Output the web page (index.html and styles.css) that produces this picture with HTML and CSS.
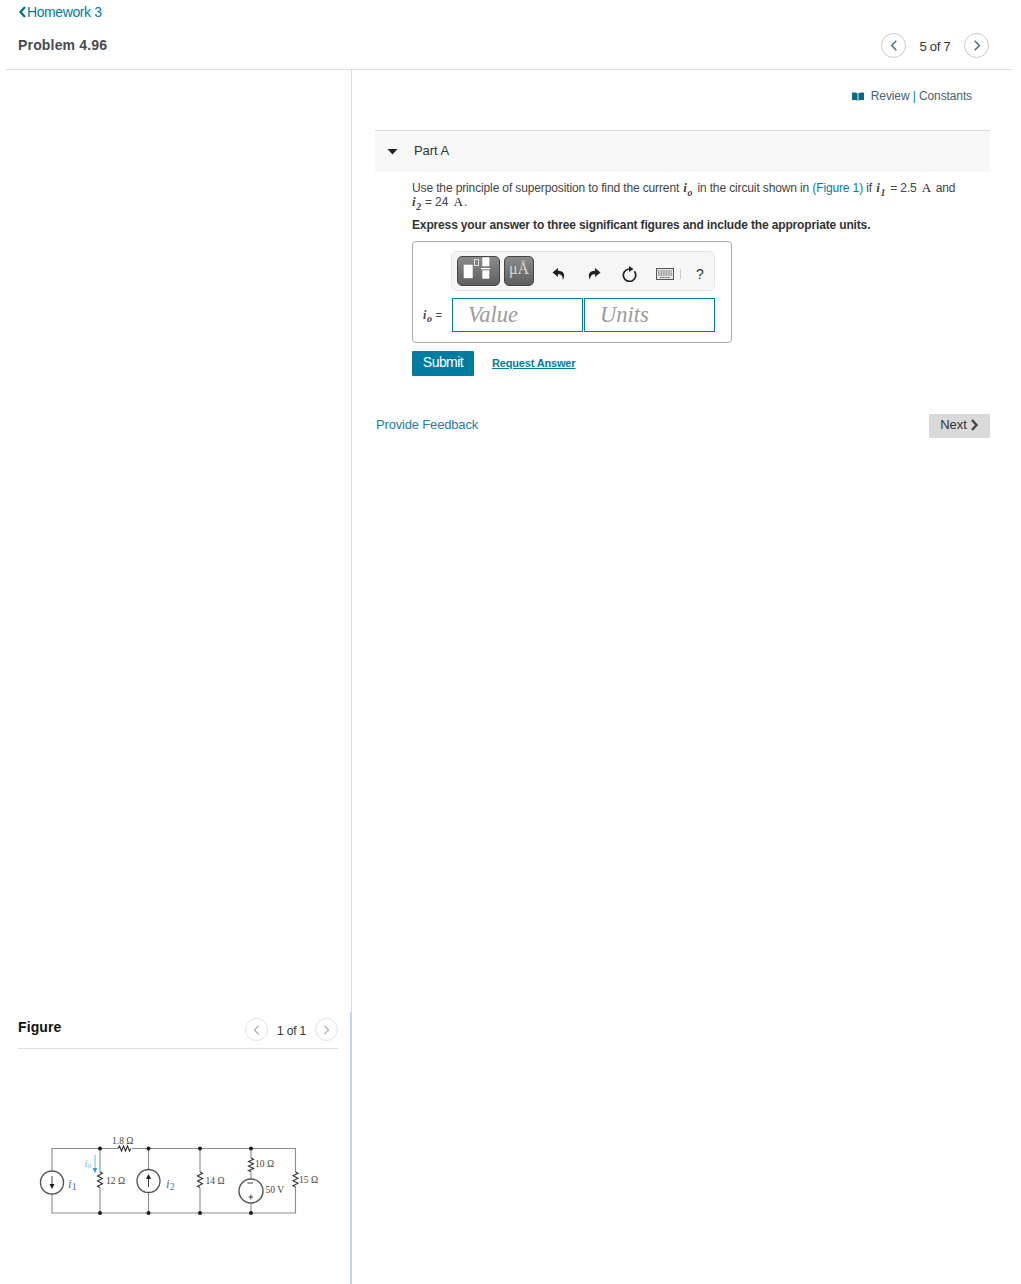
FILE: index.html
```html
<!DOCTYPE html>
<html lang="en">
<head>
<meta charset="utf-8">
<title>Problem 4.96</title>
<link rel="stylesheet" href="styles.css">
</head>
<body>
<header class="header">
  <a class="back"><svg class="back-icon" viewBox="0 0 8 12"><path d="M6.5 1 L2 6 L6.5 11" /></svg>Homework 3</a>
  <div class="title-row">
    <h1 class="title">Problem 4.96</h1>
    <div class="pager">
      <span class="circle"><svg viewBox="0 0 10 14"><path d="M7.5 2 L2.5 7 L7.5 12"/></svg></span>
      <span class="pager-text">5 of 7</span>
      <span class="circle"><svg viewBox="0 0 10 14"><path d="M2.5 2 L7.5 7 L2.5 12"/></svg></span>
    </div>
  </div>
</header>
<main class="main">
  <aside class="left">
    <div class="fig-head">
      <h2 class="fig-title">Figure</h2>
      <div class="fig-pager">
        <span class="circle small"><svg viewBox="0 0 10 14"><path d="M7.5 2 L2.5 7 L7.5 12"/></svg></span>
        <span class="fig-pager-text">1 of 1</span>
        <span class="circle small"><svg viewBox="0 0 10 14"><path d="M2.5 2 L7.5 7 L2.5 12"/></svg></span>
      </div>
    </div>
    <svg class="circuit" viewBox="30 1125 292 100" width="292" height="100">
      <g class="wire">
        <path d="M52 1171 V1148.5 H118 M132 1148.5 H295.5 V1172 M295.5 1187 V1213 H52 V1194"/>
        <path d="M100 1148.5 V1172 M100 1188 V1213"/>
        <path d="M148.500 1148.500 V1169 M148.500 1193 V1213"/>
        <path d="M200 1148.500 V1172 M200 1188 V1213"/>
        <path d="M251 1148.500 V1158 M251 1172 V1179 M251 1203 V1213"/>
      </g>
      <g class="res">
        <path d="M118 1148.500 l1.500 -2.500 l2 5 l2 -5 l2 5 l2 -5 l2 5 l1.500 -2.500"/>
        <path d="M100 1172 l2.500 1.300 l-5 2.600 l5 2.600 l-5 2.600 l5 2.600 l-5 2.600 l2.500 1.300"/>
        <path d="M200 1172 l2.500 1.300 l-5 2.600 l5 2.600 l-5 2.600 l5 2.600 l-5 2.600 l2.500 1.300"/>
        <path d="M251 1158 l2.500 1.200 l-5 2.300 l5 2.300 l-5 2.300 l5 2.300 l-5 2.300 l2.500 .8"/>
        <path d="M295.500 1172 l2.500 1.200 l-5 2.500 l5 2.500 l-5 2.500 l5 2.500 l-5 2.500 l2.500 1.300"/>
      </g>
      <g class="src">
        <circle cx="52" cy="1182.500" r="11.500"/>
        <circle cx="148.500" cy="1181" r="11.500"/>
        <circle cx="251" cy="1191" r="12"/>
      </g>
      <g class="arrow-line">
        <path d="M52 1176 V1187"/>
        <path d="M148.500 1176 V1187"/>
        <path d="M247.500 1183 H253"/>
        <path d="M248.500 1197 H253 M250.800 1194.500 V1199.500"/>
      </g>
      <path class="arrow-head" d="M49.500 1184 H54.500 L52 1189 Z"/>
      <path class="arrow-head" d="M146 1179 H151 L148.500 1174 Z"/>
      <g class="dots">
        <circle cx="100" cy="1148.500" r="2"/><circle cx="148.500" cy="1148.500" r="2"/><circle cx="200" cy="1148.500" r="2"/><circle cx="251" cy="1148.500" r="2"/>
        <circle cx="100" cy="1213" r="2"/><circle cx="148.500" cy="1213" r="2"/><circle cx="200" cy="1213" r="2"/><circle cx="251" cy="1213" r="2"/>
      </g>
      <path class="io-line" d="M95 1155 V1171"/>
      <path class="io-head" d="M92.700 1168 H97.300 L95 1173 Z"/>
      <text class="ct" x="112" y="1143.500">1.8 Ω</text>
      <text class="ct" x="106" y="1183.500">12 Ω</text>
      <text class="ct" x="205.500" y="1184">14 Ω</text>
      <text class="ct" x="255" y="1167">10 Ω</text>
      <text class="ct" x="265.500" y="1193">50 V</text>
      <text class="ct" x="299" y="1182.500">15 Ω</text>
      <text class="cl" x="68" y="1188">i<tspan class="sb" dy="2">1</tspan></text>
      <text class="cl" x="166" y="1188">i<tspan class="sb" dy="2">2</tspan></text>
      <text class="clb" x="84.500" y="1167">i<tspan class="sbb" dy="1">o</tspan></text>
    </svg>
  </aside>
  <section class="right">
    <div class="review"><svg class="book" viewBox="0 0 13 9"><path d="M0 .5 C2 0 5 0 6 1 V9 C5 8 2 8 0 8.500 Z M13 .5 C11 0 8 0 7 1 V9 C8 8 11 8 13 8.500 Z"/></svg><a class="review-link">Review</a><span class="sep"> | </span><a class="review-link">Constants</a></div>
    <div class="part-bar"><svg class="caret" viewBox="0 0 10 6"><path d="M0 0 H10 L5 5.500 Z"/></svg><span class="part-name">Part A</span></div>
    <div class="part-body">
      <p class="prompt">Use the principle of superposition to find the current <span class="m gap">i<sub>o</sub></span> in the circuit shown in <a class="link">(Figure 1)</a> if <span class="m gap">i<sub>1</sub></span> = 2.5 <span class="u">A</span> and<br><span class="m">i<sub>2</sub></span> = 24 <span class="u">A</span>.</p>
      <p class="instr">Express your answer to three significant figures and include the appropriate units.</p>
      <div class="answer">
        <div class="toolbar">
          <span class="tbtn tmpl">
            <svg viewBox="458 257 41 28" width="41" height="28"><rect class="w" x="463.700" y="264.700" width="9" height="13.500"/><rect class="o" x="474.500" y="259.500" width="4" height="6"/><rect class="w" x="482.300" y="257.300" width="7" height="9"/><rect class="w" x="481" y="268" width="9" height="1.300"/><rect class="w" x="482.300" y="270.300" width="7" height="8.400"/></svg>
          </span>
          <span class="tbtn unit"><span class="unit-text">μÅ</span></span>
          <svg class="tool t1" viewBox="0 0 14 14"><path d="M6 1 L0.500 5.500 L6 10 V7.300 C9 7.300 10.700 8.500 11 13 C13.500 8 12 3.800 6 3.800 Z"/></svg>
          <svg class="tool t2" viewBox="0 0 14 14"><path d="M8 1 L13.500 5.500 L8 10 V7.300 C5 7.300 3.300 8.500 3 13 C.5 8 2 3.800 8 3.800 Z"/></svg>
          <svg class="tool t3" viewBox="0 0 16 16"><path class="ring" d="M12.300 5.200 A6.200 6.200 0 1 1 7 3"/><path d="M7 0 L11.500 3 L7 6 Z"/></svg>
          <svg class="kbd" viewBox="0 0 18 12"><rect x=".5" y=".5" width="17" height="11" class="kb-o"/><path class="kb-k" d="M2 3 H16 M2 5 H16 M2 7 H16 M4 9.500 H14"/></svg>
          <span class="bar"></span>
          <span class="help">?</span>
        </div>
        <div class="inputs">
          <span class="var"><span class="m">i<sub>o</sub></span> =</span>
          <span class="field">Value</span>
          <span class="field">Units</span>
        </div>
      </div>
      <div class="actions">
        <a class="submit">Submit</a>
        <a class="request">Request Answer</a>
      </div>
    </div>
    <div class="foot">
      <a class="feedback">Provide Feedback</a>
      <a class="next">Next<svg class="next-icon" viewBox="0 0 8 12"><path d="M1.500 1 L6 6 L1.500 11"/></svg></a>
    </div>
  </section>
</main>
</body>
</html>
```
FILE: styles.css
```css
* { box-sizing: border-box; }
html, body { margin: 0; padding: 0; }
body { font-family: "Liberation Sans", Arial, sans-serif; background: #fff; color: #333; font-size: 12px; height: 1284px; overflow: hidden; }
h1, h2, p { margin: 0; }
.header { height: 70px; margin: 0 9px 0 6px; padding: 4px 23px 0 12px; border-bottom: 1px solid #dcdee0; }
.back { display: flex; align-items: center; height: 15px; font-size: 14px; color: #007c9e; letter-spacing: -.4px; }
.back-icon { width: 9px; height: 12px; fill: none; stroke: #00708f; stroke-width: 2.200; }
.title-row { display: flex; justify-content: space-between; align-items: center; margin-top: 13px; height: 26px; }
.title { font-size: 14px; font-weight: bold; color: #474b50; letter-spacing: .17px; }
.pager { display: flex; align-items: center; }
.pager-text { width: 58px; text-align: center; font-size: 13px; color: #333; letter-spacing: -.25px; padding-top: 2px; }
.circle { display: flex; align-items: center; justify-content: center; width: 25px; height: 25px; border: 1px solid #c9c9c9; border-radius: 50%; }
.circle svg { width: 10px; height: 13px; fill: none; stroke: #3d6a85; stroke-width: 1.500; }
.circle.small { width: 23px; height: 23px; border-color: #e2e2e2; }
.circle.small svg { stroke: #b3b3b3; width: 9px; height: 12px; }
.main { display: flex; height: 1214px; }
.left { width: 352px; flex: none; display: flex; flex-direction: column; justify-content: flex-end; padding-left: 18px; padding-right: 13px; border-right: 1px solid #d9dce0; position: relative; }
.left::after { content: ""; position: absolute; right: -1px; top: 942px; bottom: 0; width: 2px; background: #c5d3e6; }
.fig-head { display: flex; justify-content: space-between; align-items: center; height: 38px; border-bottom: 1px solid #dcdee0; }
.fig-title { font-size: 14px; font-weight: bold; color: #111; position: relative; top: -3px; letter-spacing: .1px; }
.fig-pager { display: flex; align-items: center; }
.fig-pager-text { width: 47px; text-align: center; font-size: 12px; color: #333; letter-spacing: -.2px; padding-top: 3px; }
.circuit { display: block; margin: 76px 0 59px 12px; flex: none; }
.wire, .res, .src, .arrow-line { fill: none; stroke: #8c8c8c; stroke-width: 1.100; }
.res { stroke: #333; stroke-width: 1.100; }
.src { stroke: #555; stroke-width: 1.400; }
.arrow-line { stroke: #444; stroke-width: 1; }
.arrow-head, .dots { fill: #1d1d1d; }
.io-line { stroke: #7ac4e6; stroke-width: 1.100; fill: none; }
.io-head { fill: #2b9bd6; }
.ct { font-family: "Liberation Serif", serif; font-size: 9.500px; fill: #444; }
.cl { font-family: "Liberation Serif", serif; font-style: italic; font-size: 13px; fill: #5a6f8c; }
.sb { font-size: 10px; font-style: normal; }
.clb { font-family: "Liberation Serif", serif; font-style: italic; font-size: 11px; fill: #6fbfe5; }
.sbb { font-size: 8px; }
.right { flex: 1; padding: 0 31px 0 23px; }
.review { display: flex; align-items: center; justify-content: flex-end; height: 14px; margin: 19px 18px 0 0; font-size: 12px; color: #4b6172; letter-spacing: -.11px; }
.book { width: 12px; height: 9px; margin-right: 7px; fill: #0b6a84; }
.sep { white-space: pre; color: #007c9e; }
.part-bar { display: flex; align-items: center; height: 42px; margin-top: 27px; background: #f8f8f8; border-top: 1px solid #dcdcdc; padding-left: 12px; }
.caret { width: 11px; height: 6px; fill: #222; }
.part-name { margin-left: 16px; padding-bottom: 2px; font-size: 13px; color: #333; letter-spacing: -.05px; }
.part-body { padding-left: 37px; }
.prompt { margin-top: 9px; font-size: 12px; line-height: 14px; color: #444; letter-spacing: -.13px; }
.m { font-family: "Liberation Serif", serif; font-style: italic; font-weight: bold; font-size: 13px; color: #444; letter-spacing: .6px; }
.m sub { font-size: 10px; line-height: 0; }
.gap { margin: 0 1px; }
.u { font-family: "Liberation Serif", serif; font-size: 13px; color: #222; letter-spacing: .3px; margin: 0 1px 0 2px; }
.link { color: #007c9e; }
.instr { margin-top: 9px; font-size: 12px; font-weight: bold; line-height: 14px; color: #333; letter-spacing: -.15px; }
.answer { width: 320px; height: 102px; margin-top: 9px; border: 1px solid #aaa; border-radius: 4px; padding-top: 9px; }
.toolbar { display: flex; align-items: center; width: 264px; height: 40px; margin-left: 38px; background: #f6f6f6; border: 1px solid #e3e3e3; border-radius: 6px; padding-left: 5px; }
.tbtn { display: flex; align-items: center; justify-content: center; flex: none; height: 30px; background: linear-gradient(#8b8b8b, #5f5f5f); border: 1px solid #444; border-radius: 5px; }
.tmpl { width: 43px; }
.tmpl .w { fill: #fff; }
.tmpl .o { fill: none; stroke: #ddd; stroke-width: 1; }
.unit { width: 30px; margin-left: 4px; }
.unit-text { font-family: "Liberation Serif", serif; font-size: 16px; color: #d8d8d8; position: relative; top: -2px; }
.tool { width: 14px; height: 14px; fill: #222; flex: none; margin-top: 5px; }
.t1 { margin-left: 18px; }
.t2 { margin-left: 21px; }
.t3 { width: 16px; height: 16px; margin-left: 21px; }
.t3 .ring { fill: none; stroke: #222; stroke-width: 1.700; }
.kbd { width: 18px; height: 12px; margin: 6px 0 0 18px; }
.kb-o { fill: #e6e6e6; stroke: #555; }
.kb-k { fill: none; stroke: #555; stroke-dasharray: 1 .6; }
.bar { width: 1px; height: 10px; background: #ccc; margin: 6px 0 0 6px; }
.help { margin: 5px 0 0 15px; font-size: 14px; color: #333; }
.inputs { display: flex; align-items: center; margin-top: 7px; padding-left: 10px; }
.var { width: 29px; font-size: 11px; color: #444; white-space: nowrap; }
.var .m { font-size: 12px; }
.field { display: block; flex: none; width: 131px; height: 34px; margin-right: 1px; padding-left: 15px; border: 1px solid #007c9e; font-family: "Liberation Serif", serif; font-style: italic; font-size: 22.500px; line-height: 32px; color: #9b9b9b; }
.actions { display: flex; align-items: center; margin-top: 8px; }
.submit { display: flex; align-items: center; justify-content: center; width: 62px; height: 25px; background: #007c9e; border-radius: 1px; color: #fff; font-size: 14px; letter-spacing: -.55px; padding-bottom: 3px; }
.request { margin-left: 18px; padding-bottom: 2px; font-size: 11px; font-weight: bold; color: #007c9e; text-decoration: underline; letter-spacing: -.17px; }
.foot { display: flex; justify-content: space-between; align-items: center; margin-top: 38px; padding-left: 1px; }
.feedback { padding-bottom: 4px; font-size: 13px; color: #1a7f9f; letter-spacing: -.17px; }
.next { display: flex; align-items: center; justify-content: center; width: 61px; height: 24px; padding-bottom: 3px; background: #d9d9d9; border-radius: 1px; font-size: 13px; color: #333; letter-spacing: -.1px; }
.next-icon { width: 9px; height: 12px; margin-left: 3px; fill: none; stroke: #444; stroke-width: 2.400; }
```
